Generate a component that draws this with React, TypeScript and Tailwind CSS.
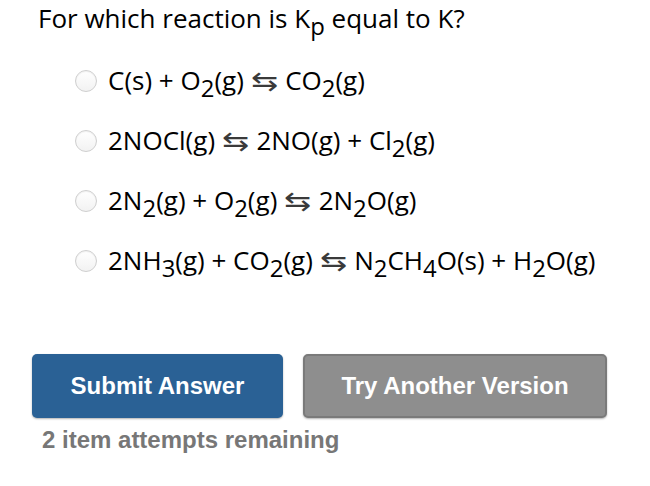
import React from "react";

const Sub = ({ children }: { children: React.ReactNode }) => (
  <sub className="text-[0.92em] relative top-[0.28em] align-baseline leading-none">{children}</sub>
);

const Arrow = () => (
  <>
    {" "}
    <span
      className="inline-block mx-[3px] scale-x-125 text-[#3a3a3a]"
      style={{ fontFamily: "'DejaVu Sans', sans-serif" }}
    >
      ⇆
    </span>{" "}
  </>
);

const options: React.ReactNode[] = [
  <>
    C(s) + O<Sub>2</Sub>(g)
    <Arrow />
    CO<Sub>2</Sub>(g)
  </>,
  <>
    2NOCl(g)
    <Arrow />
    2NO(g) + Cl<Sub>2</Sub>(g)
  </>,
  <>
    2N<Sub>2</Sub>(g) + O<Sub>2</Sub>(g)
    <Arrow />
    2N<Sub>2</Sub>O(g)
  </>,
  <>
    2NH<Sub>3</Sub>(g) + CO<Sub>2</Sub>(g)
    <Arrow />
    N<Sub>2</Sub>CH<Sub>4</Sub>O(s) + H<Sub>2</Sub>O(g)
  </>,
];

export default function App() {
  return (
    <div className="w-[650px] h-[486px] bg-white text-black" style={{ fontFamily: "'Open Sans', sans-serif" }}>
      <div className="pl-[38px]">
        <h1 className="text-[26px] leading-[36px] font-normal whitespace-nowrap">
          For which reaction is K<Sub>p</Sub> equal to K?
        </h1>
        <ul className="mt-[26px] pl-[37px] flex flex-col gap-[24px]">
          {options.map((opt, i) => (
            <li key={i} className="flex items-start h-[36px]">
              <span className="mt-[8px] w-[22px] h-[22px] rounded-full border border-[#cfcfcf] bg-gradient-to-b from-white to-[#f2f2f2] shadow-[inset_0_1px_1px_rgba(0,0,0,0.06)] shrink-0" />
              <span className="ml-[11px] text-[26px] leading-[36px] whitespace-nowrap">{opt}</span>
            </li>
          ))}
        </ul>
      </div>
      <div className="mt-[76px] pl-[32px] flex gap-[20px]">
        <button
          className="w-[251px] h-[64px] rounded-[5px] bg-[#2a6195] text-white text-[24px] font-bold shadow-[0_1px_2px_rgba(0,0,0,0.3)]"
          style={{ fontFamily: "'Liberation Sans', Arial, sans-serif" }}
        >
          Submit Answer
        </button>
        <button
          className="w-[304px] h-[64px] rounded-[5px] bg-[#8e8e8e] border-2 border-[#7a7a7a] text-white text-[24px] font-bold shadow-[0_1px_2px_rgba(0,0,0,0.3)]"
          style={{ fontFamily: "'Liberation Sans', Arial, sans-serif" }}
        >
          Try Another Version
        </button>
      </div>
      <p
        className="pl-[42px] mt-[8px] text-[24px] font-bold text-[#777777] leading-[28px]"
        style={{ fontFamily: "'Liberation Sans', Arial, sans-serif" }}
      >
        2 item attempts remaining
      </p>
    </div>
  );
}
